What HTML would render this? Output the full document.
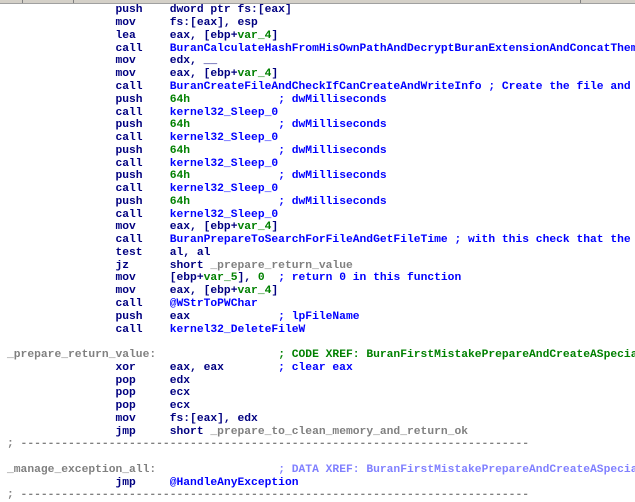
<!DOCTYPE html>
<html><head><meta charset="utf-8"><style>
html,body{margin:0;padding:0;background:#fff;width:635px;height:500px;overflow:hidden}
.top{position:absolute;left:0;top:0;width:635px;height:3px;background:#d4d0c8;border-bottom:1px solid #a0a0a0}
.sep{position:absolute;top:0;width:1px;height:3px;background:#808080}
pre{position:absolute;left:7px;top:4.4px;margin:0;font-family:"Liberation Mono",monospace;font-weight:bold;font-size:11.3px;line-height:12.76px;color:#000080;white-space:pre}
.f{color:#0000ff}.g{color:#008000}.c{color:#0000ff}.l{color:#808080}.x{color:#008000}.d{color:#8080ff}
</style></head><body>
<div class="top"></div><div class="sep" style="left:22px"></div><div class="sep" style="left:73px"></div><div class="sep" style="left:580px"></div>
<pre>                push    dword ptr fs:[eax]
                mov     fs:[eax], esp
                lea     eax, [ebp+<span class="g">var_4</span>]
                call    <span class="f">BuranCalculateHashFromHisOwnPathAndDecryptBuranExtensionAndConcatThem</span>
                mov     edx, __
                mov     eax, [ebp+<span class="g">var_4</span>]
                call    <span class="f">BuranCreateFileAndCheckIfCanCreateAndWriteInfo</span> <span class="c">; Create the file and</span>
                push    <span class="g">64h</span>             <span class="c">; dwMilliseconds</span>
                call    <span class="f">kernel32_Sleep_0</span>
                push    <span class="g">64h</span>             <span class="c">; dwMilliseconds</span>
                call    <span class="f">kernel32_Sleep_0</span>
                push    <span class="g">64h</span>             <span class="c">; dwMilliseconds</span>
                call    <span class="f">kernel32_Sleep_0</span>
                push    <span class="g">64h</span>             <span class="c">; dwMilliseconds</span>
                call    <span class="f">kernel32_Sleep_0</span>
                push    <span class="g">64h</span>             <span class="c">; dwMilliseconds</span>
                call    <span class="f">kernel32_Sleep_0</span>
                mov     eax, [ebp+<span class="g">var_4</span>]
                call    <span class="f">BuranPrepareToSearchForFileAndGetFileTime</span> <span class="c">; with this check that the</span>
                test    al, al
                jz      short <span class="l">_prepare_return_value</span>
                mov     [ebp+<span class="g">var_5</span>], <span class="g">0</span>  <span class="c">; return 0 in this function</span>
                mov     eax, [ebp+<span class="g">var_4</span>]
                call    <span class="f">@WStrToPWChar</span>
                push    eax             <span class="c">; lpFileName</span>
                call    <span class="f">kernel32_DeleteFileW</span>

<span class="l">_prepare_return_value:</span>                  <span class="x">; CODE XREF: BuranFirstMistakePrepareAndCreateASpecial</span>
                xor     eax, eax        <span class="c">; clear eax</span>
                pop     edx
                pop     ecx
                pop     ecx
                mov     fs:[eax], edx
                jmp     short <span class="l">_prepare_to_clean_memory_and_return_ok</span>
<span class="l">; ---------------------------------------------------------------------------</span>

<span class="l">_manage_exception_all:</span>                  <span class="d">; DATA XREF: BuranFirstMistakePrepareAndCreateASpecial</span>
                jmp     <span class="f">@HandleAnyException</span>
<span class="l">; ---------------------------------------------------------------------------</span>
</pre>
</body></html>
